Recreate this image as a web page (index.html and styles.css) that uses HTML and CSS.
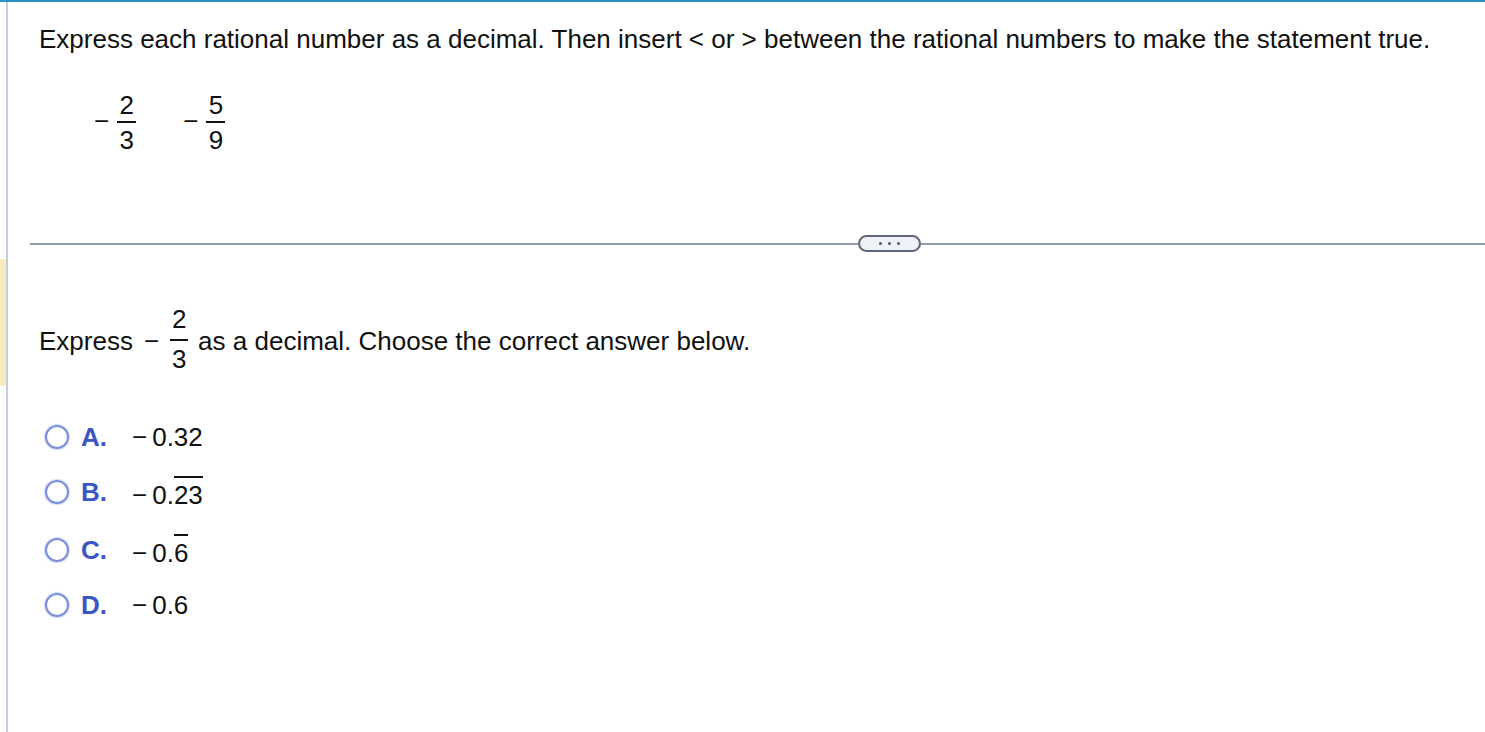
FILE: index.html
```html
<!DOCTYPE html>
<html lang="en">
<head>
<meta charset="utf-8">
<title>Rational numbers as decimals</title>
<link rel="stylesheet" href="styles.css">
</head>
<body>
<div class="topbar"></div>
<div class="page">
  <div class="gutter"><div class="marker"></div></div>
  <div class="rail"></div>
  <main class="content">
    <p class="prompt">Express each rational number as a decimal. Then insert &lt; or &gt; between the rational numbers to make the statement true.</p>
    <div class="given">
      <span class="term">
        <span class="minus">&minus;</span>
        <span class="frac"><span class="fnum">2</span><span class="fbar"></span><span class="fden">3</span></span>
      </span>
      <span class="term">
        <span class="minus">&minus;</span>
        <span class="frac"><span class="fnum">5</span><span class="fbar"></span><span class="fden">9</span></span>
      </span>
    </div>
    <div class="divider">
      <span class="dline dline-left"></span>
      <button class="more" type="button" aria-label="More"><span class="dot"></span><span class="dot"></span><span class="dot"></span></button>
      <span class="dline dline-right"></span>
    </div>
    <div class="question">
      <span class="qtext">Express</span>
      <span class="qminus">&minus;</span>
      <span class="frac frac-inline"><span class="fnum">2</span><span class="fbar"></span><span class="fden">3</span></span>
      <span class="qtext qrest">as a decimal. Choose the correct answer below.</span>
    </div>
    <ul class="options">
      <li class="option">
        <span class="radio"></span>
        <span class="letter">A.</span>
        <span class="value"><span class="vminus">&minus;</span>0.32</span>
      </li>
      <li class="option">
        <span class="radio"></span>
        <span class="letter">B.</span>
        <span class="value"><span class="vminus">&minus;</span>0.<span class="repeat">23</span></span>
      </li>
      <li class="option">
        <span class="radio"></span>
        <span class="letter">C.</span>
        <span class="value"><span class="vminus">&minus;</span>0.<span class="repeat">6</span></span>
      </li>
      <li class="option">
        <span class="radio"></span>
        <span class="letter">D.</span>
        <span class="value"><span class="vminus">&minus;</span>0.6</span>
      </li>
    </ul>
  </main>
</div>
</body>
</html>
```
FILE: styles.css
```css
* { box-sizing: border-box; }

html, body {
  margin: 0;
  padding: 0;
  background: #ffffff;
}

body {
  font-family: "Liberation Sans", Arial, sans-serif;
  font-size: 26px;
  color: #111111;
  overflow: hidden;
}

.topbar {
  height: 2px;
  background: #2b8fc7;
}

.page {
  display: flex;
  min-height: 730px;
}

.gutter {
  width: 6px;
  flex: none;
}

.marker {
  margin-top: 257px;
  height: 127px;
  background: #f8ebbd;
}

.rail {
  width: 2px;
  flex: none;
  background: #c6cde0;
}

.content {
  flex: 1;
  padding-left: 31px;
}

.prompt {
  margin: 24px 0 0;
  line-height: 1;
  white-space: nowrap;
}

.given {
  display: flex;
  margin-top: 40px;
  margin-left: 55px;
  gap: 47px;
}

.term {
  display: flex;
  align-items: center;
  gap: 8px;
}

.minus {
  line-height: 1;
  margin-bottom: 4px;
}

.frac {
  display: inline-flex;
  flex-direction: column;
  align-items: center;
  line-height: 1;
}

.fbar {
  width: 19px;
  height: 2px;
  background: #111111;
  margin: 3px 0 4px;
}

.divider {
  display: flex;
  align-items: center;
  margin-top: 82px;
  margin-left: -9px;
  height: 17px;
}

.dline {
  height: 2px;
  background: #959cab;
}

.dline-left {
  width: 828px;
  flex: none;
}

.dline-right {
  flex: 1;
}

.more {
  width: 63px;
  height: 17px;
  flex: none;
  padding: 0;
  margin: 0;
  border: 2px solid #5e6677;
  border-radius: 9px;
  background: #eef1f5;
  display: flex;
  align-items: center;
  justify-content: center;
  gap: 6px;
}

.dot {
  width: 3px;
  height: 3px;
  border-radius: 50%;
  background: #4f5666;
}

.question {
  display: flex;
  align-items: center;
  margin-top: 54px;
}

.qtext {
  line-height: 1;
  white-space: nowrap;
}

.qminus {
  line-height: 1;
  margin-left: 11px;
  margin-right: 11px;
}

.frac-inline {
  margin-bottom: 4px;
}

.frac-inline .fbar {
  width: 18px;
  margin: 7px 0 5px;
}

.qrest {
  margin-left: 10px;
}

.options {
  list-style: none;
  margin: 48px 0 0;
  padding: 0;
  display: flex;
  flex-direction: column;
  gap: 26px;
}

.option {
  display: flex;
  align-items: center;
}

.radio {
  width: 24px;
  height: 24px;
  flex: none;
  margin-left: 6px;
  margin-right: 12px;
  border-radius: 50%;
  border: 2px solid #7a8edb;
  box-shadow: 0 0 1px 1px rgba(122, 142, 219, 0.35);
}

.letter {
  width: 51px;
  flex: none;
  font-weight: bold;
  color: #3a56c5;
  line-height: 1;
}

.value {
  line-height: 1;
}

.vminus {
  margin-right: 5px;
}

.repeat {
  display: inline-block;
  border-top: 2px solid #111111;
  padding-top: 4px;
  line-height: 1;
}
```
